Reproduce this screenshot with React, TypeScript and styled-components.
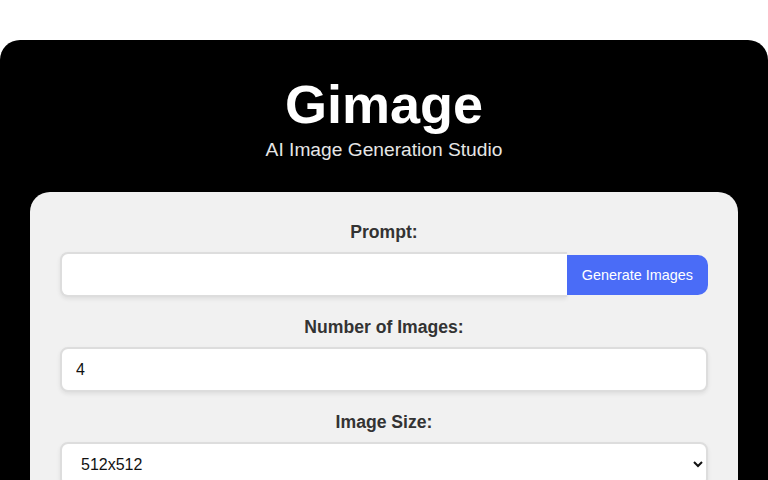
import React from 'react';
import styled, { createGlobalStyle } from 'styled-components';

const GlobalStyle = createGlobalStyle`
  html, body {
    margin: 0;
    padding: 0;
    background: #ffffff;
    font-family: 'Liberation Sans', Arial, sans-serif;
  }
  * {
    box-sizing: border-box;
  }
`;

const Page = styled.div`
  padding-top: 40px;
`;

const Container = styled.main`
  background: #000000;
  border-radius: 20px;
  padding: 34px 30px 30px;
  min-height: 600px;
`;

const Header = styled.header`
  text-align: center;
  margin-bottom: 31px;
`;

const Title = styled.h1`
  margin: 0;
  color: #ffffff;
  font-size: 54px;
  line-height: 60px;
  font-weight: 700;
`;

const Subtitle = styled.p`
  margin: 5px 0 0;
  color: #e6e6e6;
  font-size: 19.2px;
  line-height: 22px;
`;

const Card = styled.section`
  background: #f1f1f1;
  border-radius: 20px;
  padding: 30px;
`;

const Group = styled.div`
  margin-bottom: 20px;
`;

const Label = styled.label`
  display: block;
  text-align: center;
  color: #333333;
  font-size: 17.6px;
  line-height: 21px;
  font-weight: 700;
  margin-bottom: 9px;
`;

const Row = styled.div`
  display: flex;
  align-items: center;
`;

const Field = styled.input<{ $joined?: boolean }>`
  width: 100%;
  flex: 1;
  height: 45px;
  padding: 0 14px;
  border: 2px solid #dddddd;
  border-radius: ${(p) => (p.$joined ? '8px 0 0 8px' : '8px')};
  ${(p) => (p.$joined ? 'border-right: 0;' : '')}
  background: #ffffff;
  box-shadow: 0 2px 4px rgba(0, 0, 0, 0.08);
  font-family: inherit;
  font-size: 16px;
  color: #111111;
  outline: 0;
`;

const Select = styled.select`
  width: 100%;
  height: 45px;
  padding: 0 15px;
  border: 2px solid #dddddd;
  border-radius: 8px;
  background: #ffffff;
  box-shadow: 0 2px 4px rgba(0, 0, 0, 0.08);
  font-family: inherit;
  font-size: 16px;
  color: #111111;
  outline: 0;
`;

const Button = styled.button`
  height: 40px;
  padding: 0 15px;
  border: 0;
  border-radius: 0 10px 10px 0;
  background: #4a6cf7;
  color: #ffffff;
  font-family: inherit;
  font-size: 14.4px;
  white-space: nowrap;
  cursor: pointer;
`;

const App = () => {
  return (
    <Page>
      <GlobalStyle />
      <Container>
        <Header>
          <Title>Gimage</Title>
          <Subtitle>AI Image Generation Studio</Subtitle>
        </Header>
        <Card>
          <Group>
            <Label htmlFor="prompt">Prompt:</Label>
            <Row>
              <Field id="prompt" type="text" $joined />
              <Button>Generate Images</Button>
            </Row>
          </Group>
          <Group>
            <Label htmlFor="count">Number of Images:</Label>
            <Field id="count" type="number" defaultValue={4} />
          </Group>
          <Group>
            <Label htmlFor="size">Image Size:</Label>
            <Select id="size" defaultValue="512x512">
              <option value="256x256">256x256</option>
              <option value="512x512">512x512</option>
              <option value="1024x1024">1024x1024</option>
            </Select>
          </Group>
        </Card>
      </Container>
    </Page>
  );
};

export default App;
